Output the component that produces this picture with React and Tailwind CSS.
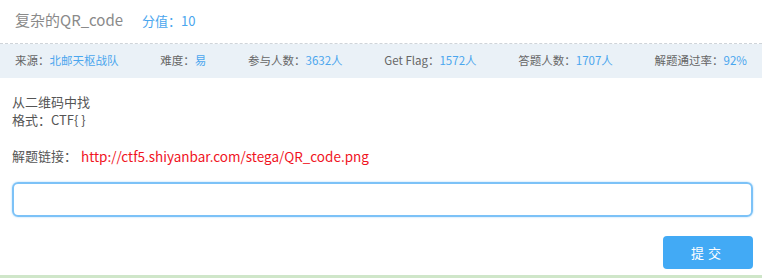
const stats = [
    {label: '来源：', value: '北邮天枢战队'},
    {label: '难度：', value: '易'},
    {label: '参与人数：', value: '3632人'},
    {label: 'Get Flag：', value: '1572人'},
    {label: '答题人数：', value: '1707人'},
    {label: '解题通过率：', value: '92%'},
];

const App = () => {
    return (
        <div className="w-[762px] h-[278px] bg-white flex flex-col font-['Noto_Sans_CJK_SC',sans-serif] overflow-hidden">
            <div className="h-[44px] flex items-center px-[15px] gap-[19px] border-b border-dashed border-[#cfd4d9]">
                <span className="text-[15px] text-[#8a8a8a] -mt-[2px]">复杂的QR_code</span>
                <span className="text-[13px] text-[#4aa6ee] -mt-[2px]">分值：10</span>
            </div>
            <div className="h-[34px] bg-[#eaf1f7] flex items-center justify-between px-[15px] text-[11.5px]">
                {stats.map(s => (
                    <div key={s.label} className="flex items-center">
                        <span className="text-[#666]">{s.label}</span>
                        <span className="text-[#4aa6ee]">{s.value}</span>
                    </div>
                ))}
            </div>
            <div className="px-[12px] pt-[15px] text-[13px] text-[#555] leading-[18px]">
                <div>从二维码中找</div>
                <div>格式：CTF{'{ }'}</div>
                <div className="mt-[18px] flex items-center">
                    <span>解题链接：</span>
                    <span className="ml-[4px] text-[13.5px] text-[#f0141e]">http://ctf5.shiyanbar.com/stega/QR_code.png</span>
                </div>
            </div>
            <div className="px-[12px] mt-[17px] pr-[9px]">
                <input className="w-full h-[35px] rounded-[6px] border-2 border-[#7cc2f7] outline-none shadow-[0_0_2px_#9fd2fa]"/>
            </div>
            <div className="flex justify-end pr-[9px] mt-[19px]">
                <button className="w-[90px] h-[33px] rounded-[4px] bg-[#42aaf5] text-white text-[13px] tracking-[4px]">提交</button>
            </div>
            <div className="mt-auto h-[3px] bg-[#cfe6c9]"></div>
        </div>
    );
};

export default App;
